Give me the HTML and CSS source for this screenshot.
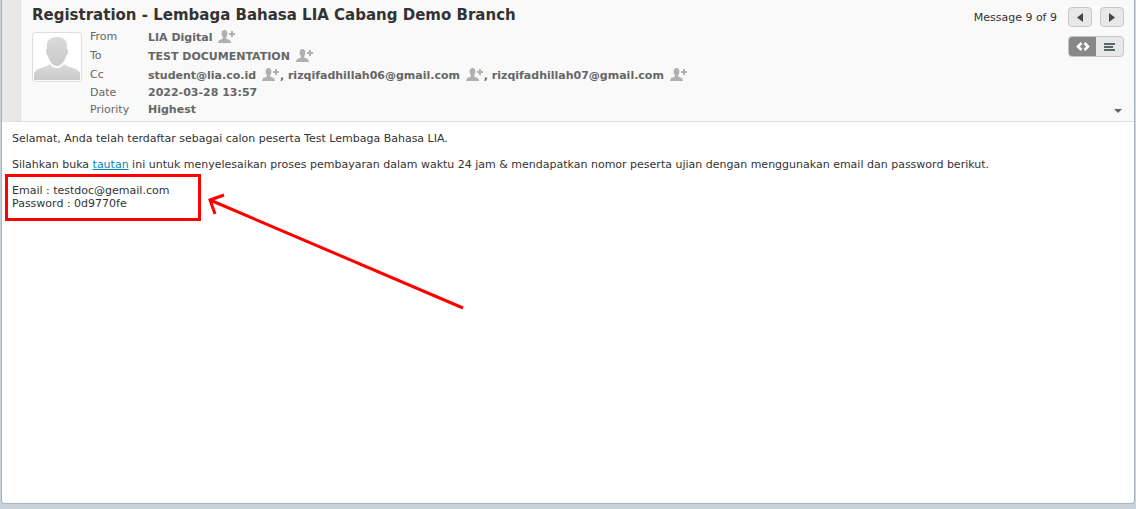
FILE: index.html
```
<!DOCTYPE html>
<html lang="id">
<head>
    <meta charset="UTF-8">
    <meta name="viewport" content="width=device-width, initial-scale=1.0">
    <title>Registration - Lembaga Bahasa LIA Cabang Demo Branch</title>
    <link rel="stylesheet" href="styles.css">
</head>
<body>

<svg class="symbols" aria-hidden="true">
    <symbol id="add-contact" viewBox="0 0 18 13">
        <path d="M6.500 0c2 0 2.900 1.300 2.900 3.200 0 1.800-.5 3-1.200 3.800v1.500c.6.900 3.700 1 4.300 2.400L13 13H0l.5-2.100c.6-1.400 3.700-1.500 4.300-2.400V7c-.7-.8-1.200-2-1.200-3.800C3.600 1.300 4.500 0 6.500 0z"/>
        <path d="M13 1h2v2h2v2h-2v2h-2V5h-2V3h2z"/>
    </symbol>
</svg>

<main class="message">
    <header class="message-header">
        <div class="header-main">
            <h1>Registration - Lembaga Bahasa LIA Cabang Demo Branch</h1>
            <div class="summary">
                <div class="photo">
                    <svg viewBox="0 0 48 48" role="img" aria-label="Contact photo">
                        <defs>
                            <linearGradient id="shade" x1="0" y1="0" x2="0" y2="1">
                                <stop offset="0" stop-color="#dadada"/>
                                <stop offset="1" stop-color="#cacaca"/>
                            </linearGradient>
                        </defs>
                        <path fill="url(#shade)" d="M24 4c6 0 10 3 10 8v4c1 0 1 1 1 3s-1 3-2 4c-1 5-5 10-9 10s-8-5-9-10c-1-1-2-2-2-4s0-3 1-3v-4c0-5 4-8 10-8z"/>
                        <path fill="url(#shade)" d="M17 31c1 2 4 4 7 4s6-2 7-4l3 2c6 2 11 3 13 7v7H1v-7c2-4 7-5 13-7z"/>
                    </svg>
                </div>
                <table class="headers">
                    <tr>
                        <th scope="row">From</th>
                        <td>LIA Digital <button class="add" aria-label="Add LIA Digital to contacts"><svg><use href="#add-contact"/></svg></button></td>
                    </tr>
                    <tr>
                        <th scope="row">To</th>
                        <td>TEST DOCUMENTATION <button class="add" aria-label="Add TEST DOCUMENTATION to contacts"><svg><use href="#add-contact"/></svg></button></td>
                    </tr>
                    <tr>
                        <th scope="row">Cc</th>
                        <td>student@lia.co.id <button class="add" aria-label="Add student@lia.co.id to contacts"><svg><use href="#add-contact"/></svg></button>, rizqifadhillah06@gmail.com <button class="add" aria-label="Add rizqifadhillah06@gmail.com to contacts"><svg><use href="#add-contact"/></svg></button>, rizqifadhillah07@gmail.com <button class="add" aria-label="Add rizqifadhillah07@gmail.com to contacts"><svg><use href="#add-contact"/></svg></button></td>
                    </tr>
                    <tr class="short">
                        <th scope="row">Date</th>
                        <td>2022-03-28 13:57</td>
                    </tr>
                    <tr class="short">
                        <th scope="row">Priority</th>
                        <td>Highest</td>
                    </tr>
                </table>
            </div>
        </div>
        <div class="controls">
            <div class="pager">
                <span>Message 9 of 9</span>
                <button class="nav-button" aria-label="Previous message"><svg width="6" height="9" viewBox="0 0 6 9"><path d="M6 0v9L0 4.500z"/></svg></button>
                <button class="nav-button" aria-label="Next message"><svg width="6" height="9" viewBox="0 0 6 9"><path d="M0 0v9l6-4.500z"/></svg></button>
            </div>
            <div class="view-mode">
                <button class="selected" aria-label="HTML view"><svg width="14" height="9" viewBox="0 0 14 9"><path d="M5.500 1 2 4.500 5.500 8M8.500 1 12 4.500 8.500 8" fill="none" stroke="#fff" stroke-width="2.600"/></svg></button>
                <button aria-label="Plain text view"><svg width="11" height="8" viewBox="0 0 11 8"><path d="M0 0h11v2H0zM0 3h9v2H0zM0 6h11v2H0z" fill="#5b666b"/></svg></button>
            </div>
            <button class="toggle" aria-label="Show more headers"><svg width="8" height="4" viewBox="0 0 8 4"><path d="M0 0h8L4 4z"/></svg></button>
        </div>
    </header>

    <article class="message-body">
        <p>Selamat, Anda telah terdaftar sebagai calon peserta Test Lembaga Bahasa LIA.</p>
        <p>Silahkan buka <a href="#">tautan</a> ini untuk menyelesaikan proses pembayaran dalam waktu 24 jam &amp; mendapatkan nomor peserta ujian dengan menggunakan email dan password berikut.</p>
        <p class="login">Email : testdoc@gemail.com<br>Password : 0d9770fe
            <svg class="arrow" width="260" height="124" viewBox="0 0 260 124" aria-hidden="true">
                <path d="M257 117 4 9M18 4 4 9l5 14" fill="none" stroke="#f00" stroke-width="3"/>
            </svg>
        </p>
    </article>
</main>

</body>
</html>
```
FILE: styles.css
```
* {
    box-sizing: border-box;
}
body {
    display: flex;
    min-height: 100vh;
    margin: 0;
    padding: 0 1px 5px;
    background: #c9d2d9;
    color: #333;
    font-family: Verdana, "DejaVu Sans", sans-serif;
    font-size: 11px;
    line-height: 13px;
}
button {
    display: flex;
    align-items: center;
    justify-content: center;
    padding: 0;
    border: 0;
    background: none;
    cursor: pointer;
}
.symbols {
    position: absolute;
    width: 0;
    height: 0;
}
.message {
    flex: 1;
    border: 1px solid #a9b5c0;
    border-top: 0;
    border-radius: 0 0 4px 4px;
    background: #fff;
}

/* Header */
.message-header {
    display: flex;
    justify-content: space-between;
    border-left: 18px solid #e8e8e8;
    border-bottom: 1px solid #dfdfdf;
    background: #f9f9f9;
    box-shadow: inset 1px 0 #dfdfdf;
}
.header-main {
    padding: 5px 0 3px 12px;
}
h1 {
    margin: 0;
    font-size: 15px;
    line-height: 20px;
}
.summary {
    display: flex;
    align-items: flex-start;
    gap: 8px;
    padding-top: 2px;
}
.photo {
    width: 50px;
    height: 50px;
    margin-top: 5px;
    border: 1px solid #ddd;
    border-radius: 4px;
    background: #fff;
}
.photo svg {
    display: block;
}
.headers {
    border-collapse: collapse;
    color: #666;
}
.headers tr {
    height: 19px;
}
.headers tr.short {
    height: 17px;
}
.headers th,
.headers td {
    padding: 0;
    text-align: left;
    white-space: nowrap;
}
.headers th {
    width: 58px;
    font-weight: normal;
}
.headers td {
    font-weight: bold;
}
.add {
    display: inline-flex;
    margin-left: 2px;
    vertical-align: -2px;
}
.add svg {
    width: 18px;
    height: 13px;
    fill: #b0b0b0;
}

/* Navigation and view controls */
.controls {
    display: flex;
    flex-direction: column;
    align-items: flex-end;
    padding: 7px 10px 8px 0;
}
.pager {
    display: flex;
    align-items: center;
    gap: 8px;
}
.pager span {
    margin-right: 3px;
}
.nav-button {
    width: 24px;
    height: 20px;
    border: 1px solid #c6c6c6;
    border-radius: 4px;
    background: #e8e8e8;
    fill: #444;
}
.view-mode {
    display: flex;
    height: 21px;
    margin-top: 9px;
    border: 1px solid #c6c6c6;
    border-radius: 4px;
    background: #e8e8e8;
    overflow: hidden;
}
.view-mode button {
    width: 27px;
}
.view-mode .selected {
    background: #888;
}
.toggle {
    margin: auto 2px 0 0;
    fill: #5b666b;
}

/* Body */
.message-body {
    padding: 10px;
}
.message-body p {
    margin: 0 0 13px;
}
.message-body a {
    color: #0186ba;
}
.message-body .login {
    position: relative;
    width: 196px;
    margin: -10px -7px 0;
    padding: 7px 4px 8px;
    border: 3px solid #f00;
}
.arrow {
    position: absolute;
    top: 14px;
    left: 198px;
}
```
